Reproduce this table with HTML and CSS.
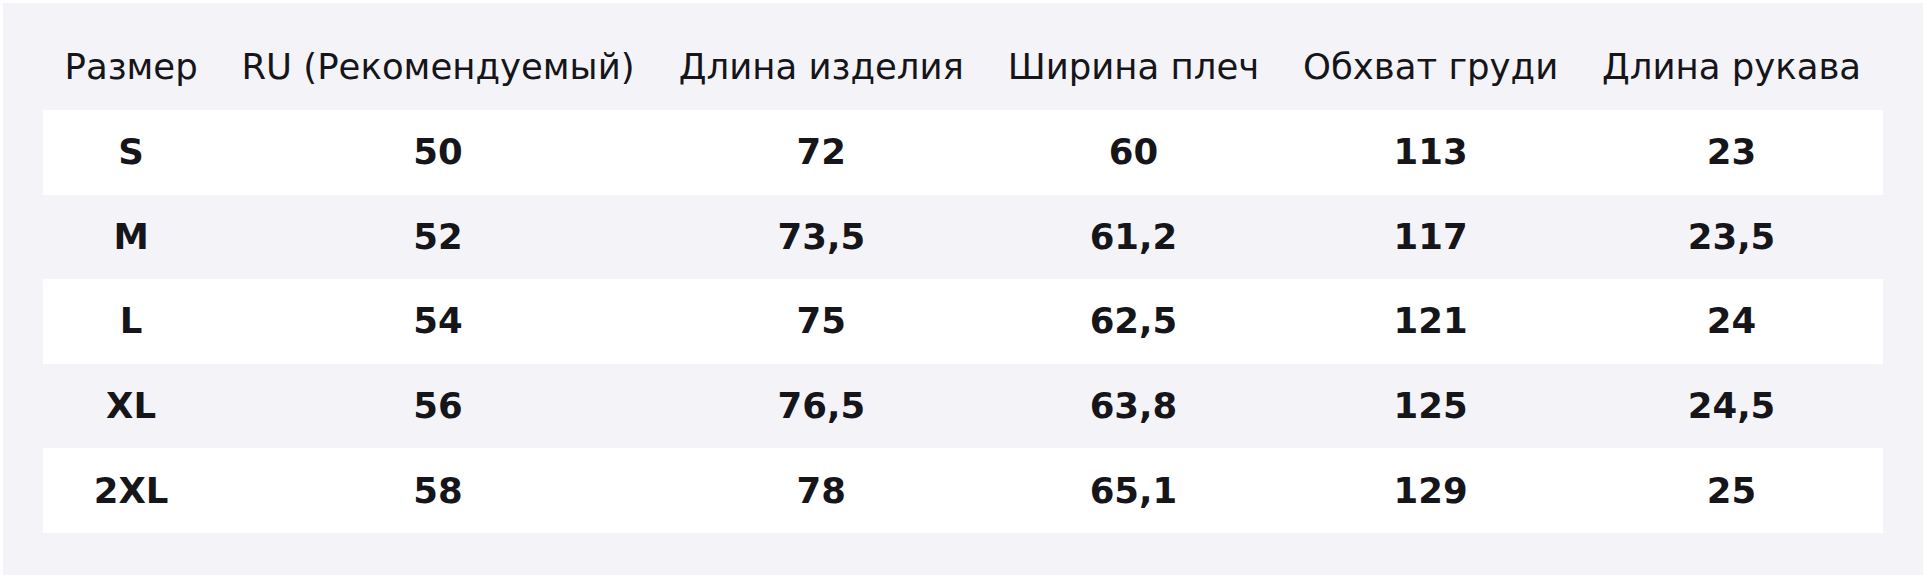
FILE: index.html
```html
<!DOCTYPE html>
<html lang="ru">
<head>
<meta charset="utf-8">
<title>Размеры</title>
<link rel="stylesheet" href="styles.css">
</head>
<body>
<div class="panel">
  <table class="sizes">
    <thead>
      <tr>
        <th>Размер</th>
        <th>RU (Рекомендуемый)</th>
        <th>Длина изделия</th>
        <th>Ширина плеч</th>
        <th>Обхват груди</th>
        <th>Длина рукава</th>
      </tr>
    </thead>
    <tbody>
      <tr><td>S</td><td>50</td><td>72</td><td>60</td><td>113</td><td>23</td></tr>
      <tr><td>M</td><td>52</td><td>73,5</td><td>61,2</td><td>117</td><td>23,5</td></tr>
      <tr><td>L</td><td>54</td><td>75</td><td>62,5</td><td>121</td><td>24</td></tr>
      <tr><td>XL</td><td>56</td><td>76,5</td><td>63,8</td><td>125</td><td>24,5</td></tr>
      <tr><td>2XL</td><td>58</td><td>78</td><td>65,1</td><td>129</td><td>25</td></tr>
    </tbody>
  </table>
</div>
</body>
</html>
```

FILE: styles.css
```css
html, body {
  margin: 0;
  padding: 0;
  background: #ffffff;
}

body {
  padding: 3px;
  font-family: "DejaVu Sans", sans-serif;
  color: #15151a;
}

.panel {
  background: #f4f4f8;
  padding: 22px 40px 42px;
  height: 572px;
  box-sizing: border-box;
}

.sizes {
  width: 100%;
  border-collapse: collapse;
  border-spacing: 0;
}

.sizes th,
.sizes td {
  font-size: 35.5px;
  line-height: 42px;
  padding: 21.3px 21px;
  text-align: center;
  white-space: nowrap;
}

.sizes th {
  font-weight: normal;
  padding: 21px 21px 22px;
}

.sizes td {
  font-weight: bold;
}

.sizes tbody tr:nth-child(odd) {
  background: #ffffff;
}

.sizes tbody tr:nth-child(even) {
  background: transparent;
}
```
